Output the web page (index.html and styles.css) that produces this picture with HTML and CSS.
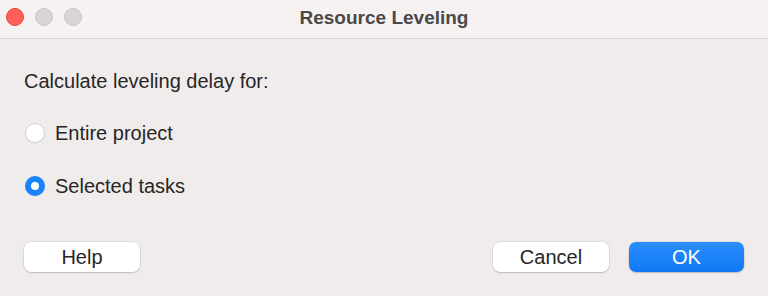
FILE: index.html
```html
<!DOCTYPE html>
<html>
<head>
<meta charset="utf-8">
<link rel="stylesheet" href="styles.css">
</head>
<body>
<div class="window">
  <div class="titlebar">
    <div class="lights">
      <span class="light red"></span>
      <span class="light gray"></span>
      <span class="light gray"></span>
    </div>
    <div class="title">Resource Leveling</div>
  </div>
  <div class="content">
    <div class="label">Calculate leveling delay for:</div>
    <div class="options">
      <label class="option"><span class="radio"></span><span>Entire project</span></label>
      <label class="option"><span class="radio checked"></span><span>Selected tasks</span></label>
    </div>
    <div class="buttons">
      <button class="btn">Help</button>
      <div class="right">
        <button class="btn">Cancel</button>
        <button class="btn primary">OK</button>
      </div>
    </div>
  </div>
</div>
</body>
</html>
```
FILE: styles.css
```css
* { box-sizing: border-box; }
html, body { margin: 0; padding: 0; }
body {
  width: 768px;
  height: 296px;
  background: #f1ecec;
  font-family: "Liberation Sans", Arial, sans-serif;
  color: #262626;
  overflow: hidden;
}
.window { width: 768px; height: 296px; display: flex; flex-direction: column; }
.titlebar {
  height: 39px;
  background: #f6f2f1;
  border-bottom: 1px solid #ddd8d8;
  position: relative;
  display: flex;
  align-items: center;
  justify-content: center;
}
.lights {
  position: absolute;
  left: 6px;
  top: 8px;
  display: flex;
  gap: 11px;
}
.light { width: 18px; height: 18px; border-radius: 50%; display: block; }
.light.red { background: #fe5f57; border: 1px solid #e2463f; }
.light.gray { background: #d9d5d4; border: 1px solid #cbc6c5; }
.title {
  font-size: 19px;
  font-weight: bold;
  color: #4b4848;
  margin-top: -3px;
}
.content {
  flex: 1;
  padding: 30px 24px 0 24px;
  display: flex;
  flex-direction: column;
}
.label { font-size: 20px; line-height: 24px; }
.options {
  display: flex;
  flex-direction: column;
  gap: 29px;
  margin-top: 28px;
}
.option {
  display: flex;
  align-items: center;
  gap: 10px;
  font-size: 20px;
  line-height: 24px;
}
.radio {
  width: 20px;
  height: 20px;
  border-radius: 50%;
  background: #ffffff;
  border: 1px solid #d8d3d3;
  margin-left: 1px;
  box-shadow: 0 0.5px 1px rgba(0,0,0,0.08);
}
.radio.checked {
  background: #ffffff;
  border: 6px solid #1a82fb;
}
.buttons {
  display: flex;
  justify-content: space-between;
  margin-top: 44px;
}
.right { display: flex; gap: 20px; }
.btn {
  width: 116px;
  height: 30px;
  border-radius: 7px;
  border: none;
  background: #ffffff;
  box-shadow: 0 0 0 0.5px rgba(0,0,0,0.12), 0 1px 1.5px rgba(0,0,0,0.15);
  font-family: "Liberation Sans", Arial, sans-serif;
  font-size: 20px;
  color: #262626;
  padding: 0;
}
.btn.primary {
  background: linear-gradient(#2b8efc, #0f78f5);
  color: #ffffff;
  width: 115px;
}
```
